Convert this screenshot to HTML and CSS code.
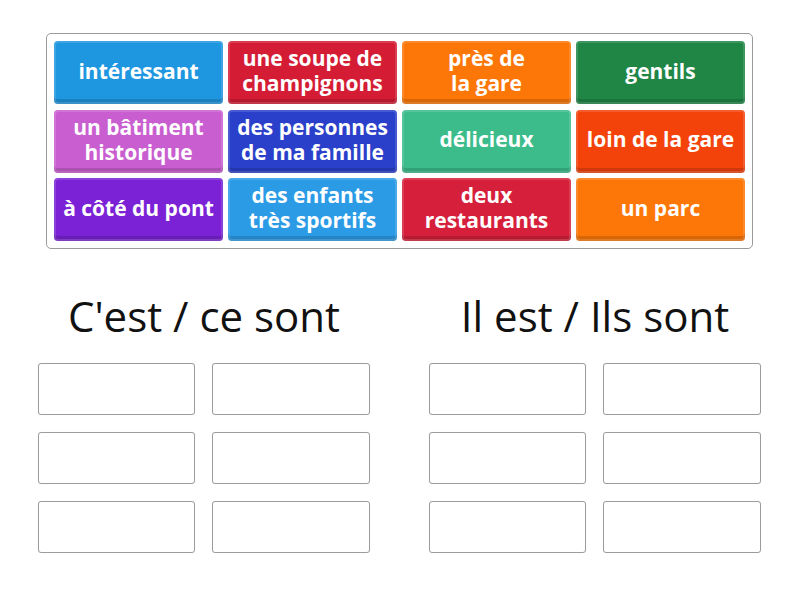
FILE: index.html
```html
<!DOCTYPE html>
<html lang="fr">
<head>
<meta charset="utf-8">
<link rel="stylesheet" href="styles.css">
</head>
<body>
<div class="page">
  <div class="bank">
    <div class="tile c-blue">intéressant</div>
    <div class="tile c-red">une soupe de champignons</div>
    <div class="tile c-orange narrow">près de la gare</div>
    <div class="tile c-green">gentils</div>
    <div class="tile c-pink">un bâtiment historique</div>
    <div class="tile c-navy">des personnes de ma famille</div>
    <div class="tile c-teal">délicieux</div>
    <div class="tile c-redorange">loin de la gare</div>
    <div class="tile c-purple">à côté du pont</div>
    <div class="tile c-sky">des enfants très sportifs</div>
    <div class="tile c-red2">deux restaurants</div>
    <div class="tile c-orange">un parc</div>
  </div>
  <div class="groups">
    <div class="group">
      <div class="group-title">C'est / ce sont</div>
      <div class="slots">
        <div class="slot"></div><div class="slot"></div>
        <div class="slot"></div><div class="slot"></div>
        <div class="slot"></div><div class="slot"></div>
      </div>
    </div>
    <div class="group">
      <div class="group-title">Il est / Ils sont</div>
      <div class="slots">
        <div class="slot"></div><div class="slot"></div>
        <div class="slot"></div><div class="slot"></div>
        <div class="slot"></div><div class="slot"></div>
      </div>
    </div>
  </div>
</div>
</body>
</html>
```
FILE: styles.css
```css
* { box-sizing: border-box; }
html, body { margin: 0; padding: 0; background: #fff; }
body { font-family: "Open Sans", "Liberation Sans", sans-serif; }
.page { width: 800px; height: 600px; padding-top: 33px; }
.bank {
  margin-left: 46px;
  width: 707px;
  border: 1px solid #9a9a9a;
  border-radius: 5px;
  padding: 7px;
  display: grid;
  grid-template-columns: repeat(4, 1fr);
  grid-auto-rows: 63px;
  gap: 5.5px 5px;
}
.tile {
  border-radius: 4px;
  color: #fff;
  font-weight: 700;
  font-size: 21px;
  line-height: 25px;
  text-align: center;
  display: flex;
  align-items: center;
  justify-content: center;
  padding: 0 4px 3px;
  box-shadow: inset 0 0 0 2px rgba(255,255,255,0.14), inset 0 -5px 0 rgba(0,0,0,0.14);
}
.tile.narrow { padding: 0 38px 3px; }
.c-blue { background: #1f97e0; }
.c-red { background: #d41d34; }
.c-orange { background: #fd7708; }
.c-green { background: #1f8646; }
.c-pink { background: #c95ed0; }
.c-navy { background: #2a3fca; }
.c-teal { background: #3cbc8b; }
.c-redorange { background: #f4420b; }
.c-purple { background: #7b22d6; }
.c-sky { background: #2b9be6; }
.c-red2 { background: #d6203b; }
.groups {
  display: flex;
  gap: 59px;
  margin-left: 38px;
  margin-top: 38px;
}
.group { width: 332px; }
.group-title {
  font-size: 42px;
  line-height: 57px;
  text-align: center;
  color: #111;
  margin-bottom: 19px;
}
.slots {
  display: grid;
  grid-template-columns: 157px 158px;
  grid-auto-rows: 52px;
  gap: 17px 17px;
}
.slot {
  border: 1px solid #9c9c9c;
  border-radius: 3px;
  background: #fff;
  box-shadow: 0 0 1px rgba(0,0,0,0.1);
}
```
